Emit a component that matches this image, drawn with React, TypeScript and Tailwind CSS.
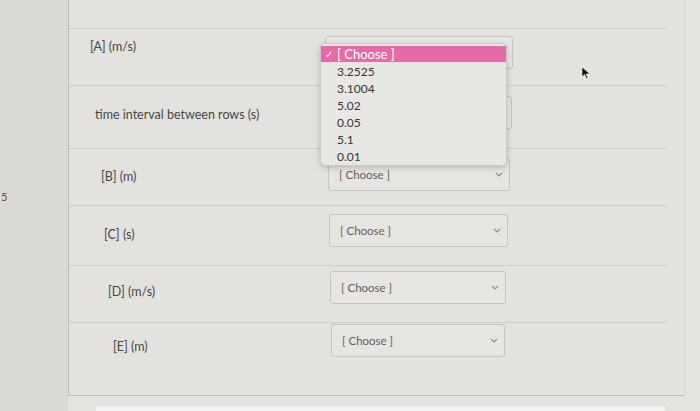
import React from "react";

const rows = [
  { label: "[A] (m/s)", h: "h-[57px]", lw: "w-[256px] pl-[21px]", lt: "pt-[9px]", box: "w-[188px]", bt: "pt-[7px]" },
  { label: "time interval between rows (s)", h: "h-[63px]", lw: "w-[257px] pl-[26px]", lt: "pt-[20px]", box: "w-[186px]", bt: "pt-[10px]" },
  { label: "[B] (m)", h: "h-[57px]", lw: "w-[259px] pl-[32px]", lt: "pt-[19px]", box: "w-[182px]", bt: "pt-[9px]" },
  { label: "[C] (s)", h: "h-[60px]", lw: "w-[260px] pl-[35px]", lt: "pt-[20px]", box: "w-[179px]", bt: "pt-[8px]" },
  { label: "[D] (m/s)", h: "h-[57px]", lw: "w-[261px] pl-[39px]", lt: "pt-[17px]", box: "w-[176px]", bt: "pt-[5px]" },
  { label: "[E] (m)", h: "h-[53px]", lw: "w-[262px] pl-[44px]", lt: "pt-[15px]", box: "w-[174px]", bt: "pt-[1px]" },
];

const options = ["3.2525", "3.1004", "5.02", "0.05", "5.1", "0.01"];

function Chevron() {
  return (
    <svg width="8" height="5" viewBox="0 0 8 5" className="shrink-0">
      <path d="M1 1l3 3 3-3" fill="none" stroke="#8a8a88" strokeWidth="1.1" />
    </svg>
  );
}

export default function App() {
  return (
    <div
      className="relative w-[700px] h-[411px] overflow-hidden bg-[#e4e3df] flex"
      style={{ fontFamily: "Lato, 'Open Sans', sans-serif" }}
    >
      {/* left gutter */}
      <div className="w-[68px] shrink-0 bg-[#dad9d5] relative">
        <span className="absolute left-[1px] top-[189px] text-[11px] text-[#555]">5</span>
      </div>

      {/* question panel */}
      <div className="w-[617px] h-[396px] border-l border-b border-r border-[#bdbcb8] border-r-[#d6d5d1] bg-[#e3e2de] pt-[28px] pr-[17px]">
        {rows.map((r) => (
          <div key={r.label} className={`${r.h} border-t border-[#cfcec9] flex items-start`}>
            <div
              className={`${r.lw} ${r.lt} shrink-0 whitespace-nowrap text-[12.5px] leading-[18px] text-[#464644]`}
            >
              {r.label}
            </div>
            <div className={r.bt}>
              <div
                className={`${r.box} h-[33px] border border-[#c4c3bf] rounded-[3px] bg-[#e6e5e1] flex items-center justify-between pl-[10px] pr-[6px]`}
              >
                <span className="text-[11.5px] text-[#5e5e5c]">[ Choose ]</span>
                <Chevron />
              </div>
            </div>
          </div>
        ))}
      </div>

      {/* strip at bottom */}
      <div className="absolute left-[96px] right-[35px] bottom-0 h-[5px] bg-[#f2f2f0]" />

      {/* open dropdown */}
      <div className="absolute left-[320px] top-[43px] w-[187px] h-[123px] rounded-[5px] bg-[#e8e7e3] border border-[#cac9c5] shadow-[0_2px_6px_rgba(0,0,0,0.18)] pt-[2px] overflow-hidden">
        <div className="h-[16px] bg-[#e56aa6] flex items-center text-white text-[13px] leading-none">
          <span className="w-[16px] pl-[4px] text-[10px]">✓</span>
          <span>[ Choose ]</span>
        </div>
        <div className="pt-[1px]">
          {options.map((o) => (
            <div key={o} className="h-[17px] pl-[16px] flex items-center text-[12px] text-[#353533]">
              {o}
            </div>
          ))}
        </div>
      </div>

      {/* mouse cursor */}
      <svg className="absolute left-[581px] top-[66px]" width="10" height="13" viewBox="0 0 10 13">
        <path d="M1 1v10l2.6-2.4 1.8 3.8 1.5-.7-1.8-3.7H9z" fill="#111" stroke="#fff" strokeWidth="0.6" />
      </svg>
    </div>
  );
}
